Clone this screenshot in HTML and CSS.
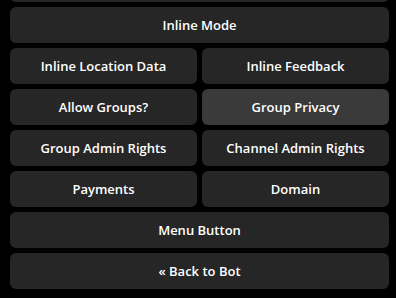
FILE: index.html
```html
<!DOCTYPE html>
<html lang="en">
<head>
    <meta charset="UTF-8">
    <meta name="viewport" content="width=device-width, initial-scale=1.0">
    <title>Bot Settings</title>
    <link rel="stylesheet" href="styles.css">
</head>
<body>

<div class="keyboard">
    <button class="key wide" aria-hidden="true"></button>
    <button class="key wide">Inline Mode</button>
    <button class="key">Inline Location Data</button>
    <button class="key">Inline Feedback</button>
    <button class="key">Allow Groups?</button>
    <button class="key active">Group Privacy</button>
    <button class="key">Group Admin Rights</button>
    <button class="key">Channel Admin Rights</button>
    <button class="key">Payments</button>
    <button class="key">Domain</button>
    <button class="key wide">Menu Button</button>
    <button class="key wide">« Back to Bot</button>
</div>

</body>
</html>
```

FILE: styles.css
```css
* {
    margin: 0;
    padding: 0;
    box-sizing: border-box;
    font-family: "Open Sans", sans-serif;
}

body {
    background-color: #000;
    overflow: hidden;
}

.keyboard {
    display: grid;
    grid-template-columns: 1fr 1fr;
    gap: 5px;
    padding: 0 7px 0 10px;
    margin-top: -34px; /* list is scrolled */
}

.key {
    height: 36px;
    padding-bottom: 1px;
    background-color: #262626;
    color: #fff;
    border: none;
    border-radius: 6px;
    font-size: 13px;
    font-weight: 600;
    cursor: pointer;
}

.key.wide {
    grid-column: span 2;
}

.key.active {
    background-color: #3a3a3a;
}
```
